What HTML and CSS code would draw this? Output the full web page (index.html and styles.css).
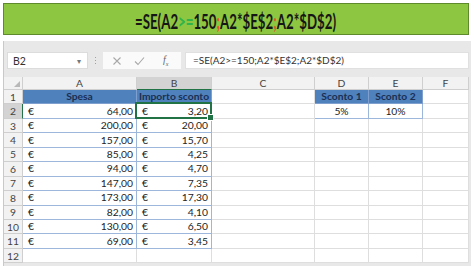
FILE: index.html
```html
<!DOCTYPE html>
<html lang="it">
<head>
<meta charset="utf-8">
<title>SE formula</title>
<link rel="stylesheet" href="styles.css">
</head>
<body>
<div class="banner"><span class="banner-text">=SE(A2<span class="op">&gt;=</span>150<span class="sep">;</span>A2*$E$2<span class="sep">;</span>A2*$D$2)</span></div>
<div class="excel">
  <div class="toolbar">
    <div class="namebox"><span>B2</span><span class="caret">&#9662;</span></div>
    <div class="dots"><i></i><i></i><i></i></div>
    <div class="icons">
      <svg width="10" height="10" viewBox="0 0 10 10"><path d="M1.5 1.5 L8.5 8.5 M8.5 1.5 L1.5 8.5" stroke="#a8a8a8" stroke-width="1.1" fill="none"/></svg>
      <svg width="11" height="10" viewBox="0 0 11 10"><path d="M1 5.5 L4 8.5 L10 1.5" stroke="#a8a8a8" stroke-width="1.1" fill="none"/></svg>
      <span class="fx">f<sub>x</sub></span>
    </div>
    <div class="formula">=SE(A2&gt;=150;A2*$E$2;A2*$D$2)</div>
  </div>
  <div class="sheet">
    <div class="ch corner"><span class="tri"></span></div>
    <div class="ch">A</div><div class="ch ch-sel">B</div><div class="ch">C</div><div class="ch">D</div><div class="ch">E</div><div class="ch">F</div>

    <div class="rh">1</div>
    <div class="c hd tb">Spesa</div><div class="c hd tb">Importo sconto</div><div class="c"></div>
    <div class="c hd tb">Sconto 1</div><div class="c hd tb">Sconto 2</div><div class="c"></div>

    <div class="rh rh-sel">2</div>
    <div class="c tb m"><span>€</span><span>64,00</span></div><div class="c tb m sel"><span>€</span><span>3,20</span></div><div class="c"></div>
    <div class="c tb pc">5%</div><div class="c tb pc">10%</div><div class="c"></div>

    <div class="rh">3</div>
    <div class="c tb m"><span>€</span><span>200,00</span></div><div class="c tb m"><span>€</span><span>20,00</span></div><div class="c"></div><div class="c"></div><div class="c"></div><div class="c"></div>

    <div class="rh">4</div>
    <div class="c tb m"><span>€</span><span>157,00</span></div><div class="c tb m"><span>€</span><span>15,70</span></div><div class="c"></div><div class="c"></div><div class="c"></div><div class="c"></div>

    <div class="rh">5</div>
    <div class="c tb m"><span>€</span><span>85,00</span></div><div class="c tb m"><span>€</span><span>4,25</span></div><div class="c"></div><div class="c"></div><div class="c"></div><div class="c"></div>

    <div class="rh">6</div>
    <div class="c tb m"><span>€</span><span>94,00</span></div><div class="c tb m"><span>€</span><span>4,70</span></div><div class="c"></div><div class="c"></div><div class="c"></div><div class="c"></div>

    <div class="rh">7</div>
    <div class="c tb m"><span>€</span><span>147,00</span></div><div class="c tb m"><span>€</span><span>7,35</span></div><div class="c"></div><div class="c"></div><div class="c"></div><div class="c"></div>

    <div class="rh">8</div>
    <div class="c tb m"><span>€</span><span>173,00</span></div><div class="c tb m"><span>€</span><span>17,30</span></div><div class="c"></div><div class="c"></div><div class="c"></div><div class="c"></div>

    <div class="rh">9</div>
    <div class="c tb m"><span>€</span><span>82,00</span></div><div class="c tb m"><span>€</span><span>4,10</span></div><div class="c"></div><div class="c"></div><div class="c"></div><div class="c"></div>

    <div class="rh">10</div>
    <div class="c tb m"><span>€</span><span>130,00</span></div><div class="c tb m"><span>€</span><span>6,50</span></div><div class="c"></div><div class="c"></div><div class="c"></div><div class="c"></div>

    <div class="rh">11</div>
    <div class="c tb m"><span>€</span><span>69,00</span></div><div class="c tb m"><span>€</span><span>3,45</span></div><div class="c"></div><div class="c"></div><div class="c"></div><div class="c"></div>

    <div class="rh">12</div>
    <div class="c"></div><div class="c"></div><div class="c"></div><div class="c"></div><div class="c"></div><div class="c"></div>
  </div>
</div>
</body>
</html>
```
FILE: styles.css
```css
* { box-sizing: border-box; }
body {
  margin: 0;
  width: 474px;
  height: 266px;
  overflow: hidden;
  background: #fff;
  font-family: Lato, "Open Sans", sans-serif;
}
.banner {
  margin: 3px 5px 0 3px;
  height: 32px;
  border: 1px solid #5e8a2c;
  background: #8dc640;
  display: flex;
  align-items: center;
  justify-content: center;
  padding-top: 3px;
}
.banner-text {
  display: inline-block;
  font-weight: 700;
  font-size: 21px;
  color: #161616;
  white-space: nowrap;
  transform: scaleX(0.63);
}
.banner-text .op { color: #2fb34b; }
.banner-text .sep { color: #e4572a; font-weight: 900; }

.excel {
  margin: 6px 3px 0 3px;
  height: 230px;
  background: #e8e8e8;
  border-left: 1px solid #c9c9c9;
}
.toolbar {
  height: 36px;
  padding-top: 11px;
  display: flex;
  align-items: flex-start;
}
.namebox {
  margin-left: 3px;
  width: 81px;
  height: 17px;
  background: #fff;
  border: 1px solid #dcdcdc;
  display: flex;
  justify-content: space-between;
  align-items: center;
  padding: 0 6px 0 5px;
  font-size: 10.5px;
  color: #333;
}
.caret { font-size: 8px; color: #777; }
.dots {
  width: 15px;
  height: 17px;
  display: flex;
  flex-direction: column;
  align-items: center;
  justify-content: center;
  gap: 2px;
}
.dots i { width: 1px; height: 1px; background: #a0a0a0; display: block; }
.icons {
  width: 78px;
  height: 17px;
  background: #fafafa;
  display: flex;
  align-items: center;
  gap: 12px;
  padding-left: 9px;
}
.fx {
  font-family: "Liberation Serif", serif;
  font-style: italic;
  font-size: 10px;
  color: #666;
  margin-left: 6px;
}
.fx sub { font-size: 6px; }
.formula {
  margin-left: 4px;
  margin-right: 2px;
  flex: 1;
  height: 17px;
  background: #fff;
  border: 1px solid #e0e0e0;
  font-size: 10px;
  line-height: 15px;
  padding-left: 7px;
  color: #333;
}
.sheet {
  display: grid;
  grid-template-columns: 19px 114px 75px 103px 54px 54px 46px;
  grid-template-rows: 13px repeat(12, 14.45px);
  font-size: 10.3px;
}
.ch, .rh {
  background: #f2f2f2;
  color: #444;
  border-right: 1px solid #cfcfcf;
  border-bottom: 1px solid #cfcfcf;
  display: flex;
  align-items: center;
  justify-content: center;
  line-height: 12px;
}
.ch-sel { background: #d3d3d3; border-bottom: 1px solid #217346; }
.rh-sel { background: #d3d3d3; border-right: 1px solid #217346; }
.corner { position: relative; }
.tri {
  position: absolute;
  right: 2px;
  bottom: 2px;
  width: 0;
  height: 0;
  border-left: 6px solid transparent;
  border-bottom: 6px solid #b8b8b8;
}
.c {
  background: #fff;
  border-right: 1px solid #dedede;
  border-bottom: 1px solid #dedede;
  color: #222;
  line-height: 13px;
  display: flex;
  align-items: center;
}
.tb { border-right-color: #9db6dc; border-bottom-color: #9db6dc; }
.hd {
  background: #4f81bd;
  color: #1b2f52;
  font-weight: 700;
  justify-content: center;
  border-right-color: #7fa0cf;
  border-bottom-color: #7fa0cf;
}
.m {
  justify-content: space-between;
  padding: 0 3px 0 5px;
}
.pc { justify-content: center; }
.sel { position: relative; }
.sel::after {
  content: "";
  position: absolute;
  top: -2px;
  left: -2px;
  right: -1px;
  bottom: -1px;
  border: 2px solid #217346;
}
.sel::before {
  content: "";
  position: absolute;
  right: -3px;
  bottom: -3px;
  width: 5px;
  height: 5px;
  background: #217346;
  border: 1px solid #fff;
  z-index: 2;
}
```
